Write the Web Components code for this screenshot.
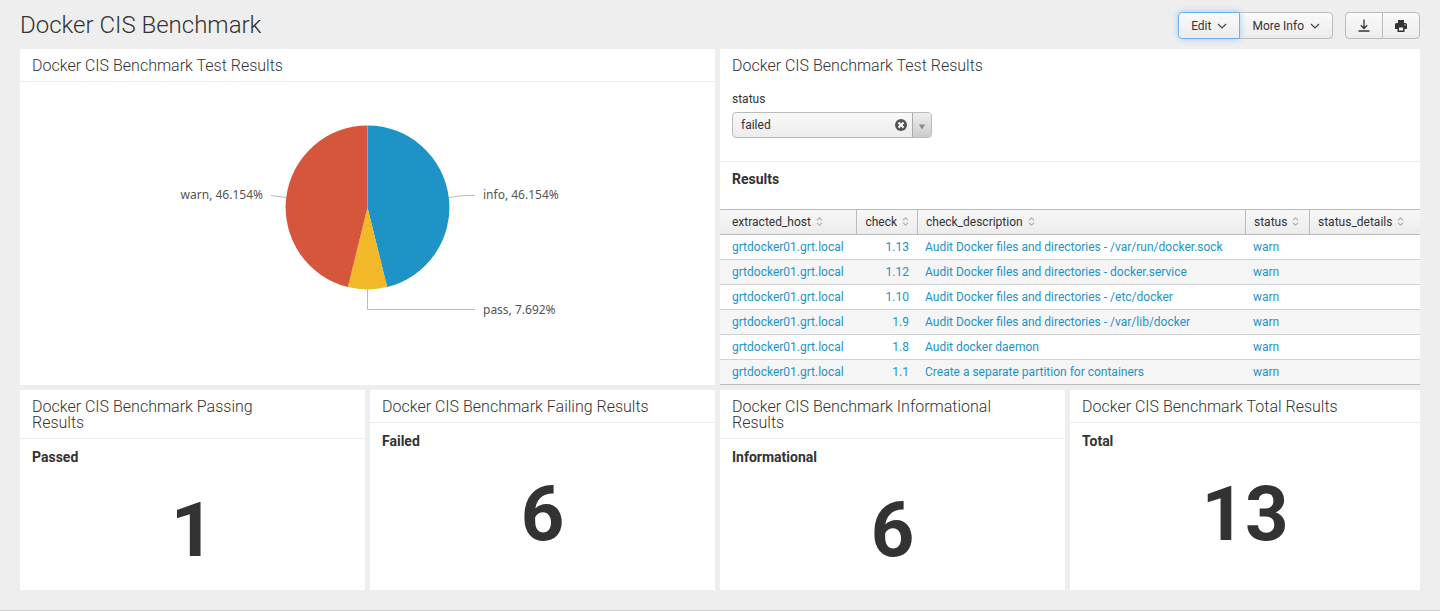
<!DOCTYPE html>
<html lang="en">
<head>
<meta charset="utf-8">
<title>Docker CIS Benchmark</title>
<style>
body { margin: 0; background: #eee; color: #333; font: 12px/20px Roboto, "Liberation Sans", sans-serif; }
</style>
</head>
<body>
<dash-board heading="Docker CIS Benchmark">
  <dash-button slot="menus" label="Edit" icon="caret" place="first" active></dash-button>
  <dash-button slot="menus" label="More Info" icon="caret" place="last"></dash-button>
  <dash-button slot="tools" name="Export PDF" icon="download" place="first"></dash-button>
  <dash-button slot="tools" name="Print" icon="print" place="last"></dash-button>

  <dash-row columns="2">
    <dash-panel heading="Docker CIS Benchmark Test Results" ruled>
      <pie-chart></pie-chart>
    </dash-panel>
    <dash-panel heading="Docker CIS Benchmark Test Results">
      <status-filter></status-filter>
      <results-table heading="Results"></results-table>
    </dash-panel>
  </dash-row>
  <dash-row columns="4">
    <dash-panel heading="Docker CIS Benchmark Passing Results" ruled>
      <single-value label="Passed">1</single-value>
    </dash-panel>
    <dash-panel heading="Docker CIS Benchmark Failing Results" ruled>
      <single-value label="Failed">6</single-value>
    </dash-panel>
    <dash-panel heading="Docker CIS Benchmark Informational Results" ruled>
      <single-value label="Informational">6</single-value>
    </dash-panel>
    <dash-panel heading="Docker CIS Benchmark Total Results" ruled>
      <single-value label="Total">13</single-value>
    </dash-panel>
  </dash-row>
</dash-board>

<script>
class Base extends HTMLElement {
  connectedCallback() {
    if (this.shadowRoot) return;
    this.attachShadow({ mode: "open" }).innerHTML = this.render();
  }
  attr(name) { return this.getAttribute(name) || ""; }
}

customElements.define("dash-board", class extends Base {
  render() {
    return `<style>
      :host { display: block; }
      header { display: flex; justify-content: space-between; padding: 12px 20px 10px; }
      h1 { margin: 0; font-size: 24px; line-height: 26px; font-weight: 300; }
      nav { display: flex; align-items: flex-end; gap: 12px; }
      .group { display: flex; }
      main { display: grid; gap: 5px; padding: 0 20px 20px; }
      footer { border-top: 1px solid #ccc; }
    </style>
    <header>
      <h1>${this.attr("heading")}</h1>
      <nav>
        <div class="group"><slot name="menus"></slot></div>
        <div class="group"><slot name="tools"></slot></div>
      </nav>
    </header>
    <main><slot></slot></main>
    <footer></footer>`;
  }
});

const ICONS = {
  caret: `<svg width="10" height="6" viewBox="0 0 10 6"><path d="M1 1l4 4 4-4" fill="none" stroke="#444" stroke-width="1.2"/></svg>`,
  download: `<svg width="12" height="13" viewBox="0 0 12 13"><path d="M6 0.5v9M2.8 6.3L6 9.5l3.2-3.2M0.5 12h11" fill="none" stroke="#333" stroke-width="1.3"/></svg>`,
  print: `<svg width="12" height="12" viewBox="0 0 12 12"><path d="M3 0h6v3h1.5A1.5 1.5 0 0 1 12 4.500V9H9.500v3h-7V9H0V4.500Q0 3 1.500 3H3z" fill="#333"/><path d="M4 7.500h4v3H4z" fill="#f2f2f2"/><path d="M9.500 4.200h1.200v1.200H9.500z" fill="#ddd"/></svg>`
};

customElements.define("dash-button", class extends Base {
  render() {
    const label = this.attr("label");
    return `<style>
      :host { display: block; }
      :host([place="last"]) { margin-left: -1px; }
      :host([active]) { position: relative; }
      button {
        display: flex; align-items: center; justify-content: center; gap: 6px;
        box-sizing: border-box; height: 27px; min-width: 38px; margin: 0; padding: 0 12px;
        font: inherit; color: #333; border: 1px solid #bbb;
        background: linear-gradient(#fafafa, #ececec);
      }
      :host([place="first"]) button { border-radius: 4px 0 0 4px; }
      :host([place="last"]) button { border-radius: 0 4px 4px 0; }
      :host([active]) button { border-color: #6cb2ea; box-shadow: 0 0 6px #9ccbf0; }
    </style>
    <button type="button"${label ? "" : ` aria-label="${this.attr("name")}"`}>${label ? `<span>${label}</span>` : ""}${ICONS[this.attr("icon")]}</button>`;
  }
});

customElements.define("dash-row", class extends Base {
  render() {
    return `<style>
      :host { display: grid; grid-template-columns: repeat(${this.attr("columns")}, minmax(0, 1fr)); }
      ::slotted(:not(:last-child)) { margin-right: 5px; }
    </style><slot></slot>`;
  }
});

customElements.define("dash-panel", class extends Base {
  render() {
    return `<style>
      :host { display: block; background: #fff; }
      h2 { margin: 0; padding: 9px 60px 7px 12px; font-size: 16px; line-height: 16px; font-weight: 300; }
      :host([ruled]) h2 { border-bottom: 1px solid #eee; }
    </style>
    <h2>${this.attr("heading")}</h2>
    <slot></slot>`;
  }
});

customElements.define("single-value", class extends Base {
  render() {
    return `<style>
      :host { display: block; padding: 8px 12px 15px; }
      h3 { margin: 0; font-size: 14px; line-height: 20px; font-weight: 700; }
      p { margin: 18px 0 0; font-size: 76px; line-height: 90px; font-weight: 700; text-align: center; }
    </style>
    <h3>${this.attr("label")}</h3>
    <p><slot></slot></p>`;
  }
});

customElements.define("pie-chart", class extends Base {
  render() {
    return `<style>
      :host { display: block; }
      svg { display: block; width: 100%; height: 303px; }
      text { font: 12px "Noto Sans", sans-serif; fill: #555; }
      .lead { fill: none; stroke: #bbb; }
    </style>
    <svg viewBox="0 0 695 303" role="img" aria-label="Results by status">
      <path fill="#1e93c6" d="M347.5 125.5V43.5A82 82 0 0 1 367.1 205.1Z"/>
      <path fill="#f2b827" d="M347.5 125.5L367.1 205.1A82 82 0 0 1 327.9 205.1Z"/>
      <path fill="#d6563c" d="M347.5 125.5L327.9 205.1A82 82 0 0 1 347.5 43.5Z"/>
      <path d="M347.5 43.5V125.5" stroke="#a9a9a9" stroke-width="0.7"/>
      <path class="lead" d="M429 115.5Q440 113.500 448 113.500H455"/>
      <path class="lead" d="M266 115.5L251 113.5"/>
      <path class="lead" d="M347.5 207.5V227.5H455"/>
      <text x="463" y="117">info, 46.154%</text>
      <text x="243" y="117" text-anchor="end">warn, 46.154%</text>
      <text x="463" y="232">pass, 7.692%</text>
    </svg>`;
  }
});

customElements.define("status-filter", class extends Base {
  render() {
    return `<style>
      :host { display: block; padding: 8px 12px 23px; border-bottom: 1px solid #eee; }
      label { display: block; line-height: 20px; margin-bottom: 3px; }
      .box {
        display: flex; box-sizing: border-box; width: 200px; height: 26px; overflow: hidden;
        border: 1px solid #bbb; border-radius: 4px; background: linear-gradient(#f9f9f9, #ececec);
      }
      select {
        flex: 1; min-width: 0; padding: 0 8px; border: 0; background: none;
        appearance: none; font: inherit; color: #333;
      }
      button { display: flex; align-items: center; justify-content: center; padding: 0; border: 0; background: none; }
      .clear { width: 22px; }
      .open { width: 19px; padding-top: 3px; border-left: 1px solid #aaa; background: linear-gradient(#eee, #ccc); }
    </style>
    <label for="status">status</label>
    <div class="box">
      <select id="status"><option>failed</option><option>passed</option></select>
      <button class="clear" type="button" aria-label="Clear"><svg width="12" height="12" viewBox="0 0 12 12"><circle cx="6" cy="6" r="6" fill="#555"/><path d="M3.500 3.500l5 5M8.500 3.500l-5 5" stroke="#fff" stroke-width="2"/></svg></button>
      <button class="open" type="button" aria-label="Open"><svg width="6" height="6" viewBox="0 0 6 6"><path d="M0 0.500h6L3 5.500z" fill="#888"/></svg></button>
    </div>`;
  }
});

const ROWS = [
  ["1.13", "Audit Docker files and directories - /var/run/docker.sock"],
  ["1.12", "Audit Docker files and directories - docker.service"],
  ["1.10", "Audit Docker files and directories - /etc/docker"],
  ["1.9", "Audit Docker files and directories - /var/lib/docker"],
  ["1.8", "Audit docker daemon"],
  ["1.1", "Create a separate partition for containers"]
];

customElements.define("results-table", class extends Base {
  render() {
    const link = t => `<a href="#">${t}</a>`;
    const sort = `<svg width="7" height="9" viewBox="0 0 7 9"><path d="M1 3.200L3.500 0.800 6 3.200M1 5.800L3.500 8.200 6 5.800" fill="none" stroke="#b5b5b5" stroke-width="1.200"/></svg>`;
    const heads = ["extracted_host", "check", "check_description", "status", "status_details"];
    return `<style>
      :host { display: block; }
      h3 { margin: 0; padding: 7px 12px 20px; font-size: 14px; line-height: 20px; font-weight: 700; }
      table { width: 100%; table-layout: fixed; border-collapse: separate; border-spacing: 0; }
      .host { width: 136px; } .check { width: 61px; } .status { width: 64px; } .details { width: 111px; }
      th, td { box-sizing: border-box; padding: 0 8px; text-align: left; white-space: nowrap; line-height: 24px; font-weight: 400; }
      th:first-child, td:first-child { padding-left: 12px; }
      th:nth-child(2), td:nth-child(2) { text-align: right; }
      th { border: solid #bbb; border-width: 1px 0 1px 1px; background: linear-gradient(#f7f7f7, #ececec); }
      th:first-child { border-left: 0; }
      th svg { margin-left: 5px; }
      td { border-bottom: 1px solid #d0d0d0; }
      tr:nth-child(even) td { background: #f5f5f5; }
      tr:last-child td { border-color: #bbb; }
      a { color: #1e93c6; text-decoration: none; }
    </style>
    <h3>${this.attr("heading")}</h3>
    <table>
      <colgroup><col class="host"><col class="check"><col><col class="status"><col class="details"></colgroup>
      <thead><tr>${heads.map(h => `<th>${h}${sort}</th>`).join("")}</tr></thead>
      <tbody>${ROWS.map(([n, d]) => `<tr><td>${link("grtdocker01.grt.local")}</td><td>${link(n)}</td><td>${link(d)}</td><td>${link("warn")}</td><td></td></tr>`).join("")}</tbody>
    </table>`;
  }
});
</script>
</body>
</html>
